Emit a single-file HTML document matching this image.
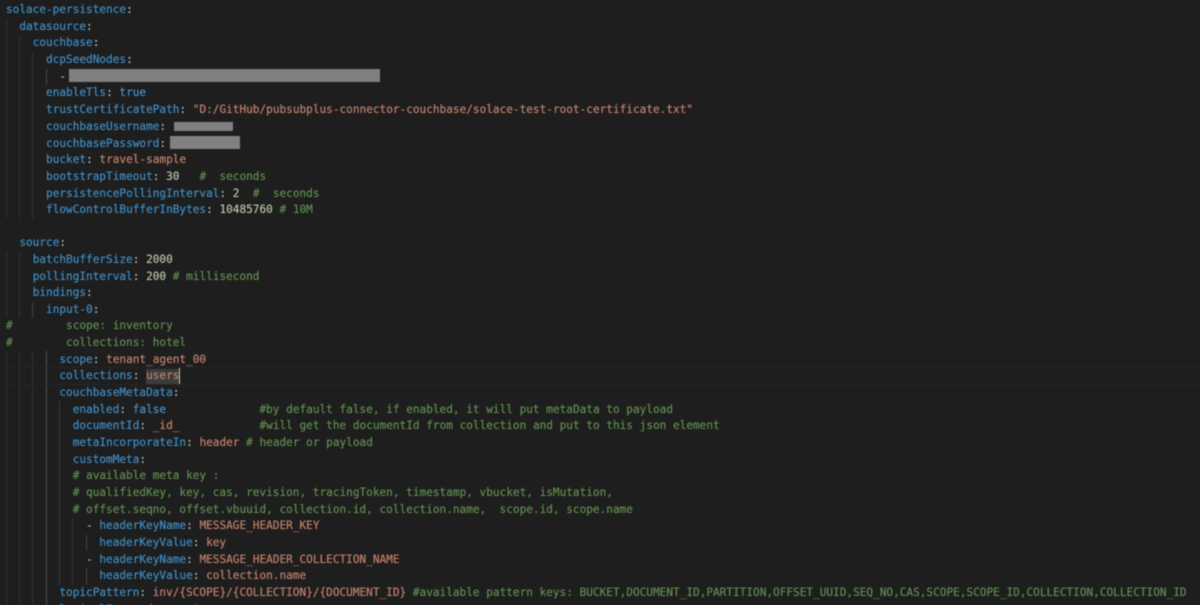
<!DOCTYPE html>
<html><head><meta charset="utf-8"><style>
html,body{margin:0;padding:0;background:#1e1e1e}
#p{position:relative;width:1200px;height:605px;overflow:hidden;background:#1e1e1e}
#b{position:absolute;inset:0;filter:blur(.45px)}
pre{position:absolute;left:0;top:1px;margin:0;padding:0;font:11.09px/16.65px "DejaVu Sans Mono","Liberation Mono",monospace;color:#b8b8b0;white-space:pre;text-shadow:0 0 .4px currentColor}
pre div{position:absolute;left:6px;height:16.65px}
.k{color:#3f8cc4}.s{color:#c0806a}.c{color:#5f8c50}.n{color:#b5c4a5}.b{color:#4a90c8}.p{color:#c8c8c8}
.g{position:absolute;width:1px;background:#323232}
.r{position:absolute;background:#808080}
</style></head><body><div id="p"><div id="b">
<div class="g" style="left:6px;top:18px;height:200px"></div>
<div class="g" style="left:19px;top:35px;height:183px"></div>
<div class="g" style="left:32px;top:52px;height:167px"></div>
<div class="g" style="left:46px;top:69px;height:16px;background:#484848"></div>
<div class="g" style="left:6px;top:251px;height:67px"></div>
<div class="g" style="left:19px;top:251px;height:67px"></div>
<div class="g" style="left:32px;top:302px;height:16px;background:#444"></div>
<div class="g" style="left:6px;top:351px;height:254px"></div>
<div class="g" style="left:19px;top:351px;height:254px"></div>
<div class="g" style="left:32px;top:351px;height:254px"></div>
<div class="g" style="left:46px;top:351px;height:254px;background:#505050"></div>
<div class="g" style="left:59px;top:401px;height:184px;background:#383838"></div>
<div class="g" style="left:72px;top:518px;height:67px"></div>
<div class="g" style="left:86px;top:535px;height:16px;background:#444"></div>
<div class="g" style="left:86px;top:568px;height:16px;background:#444"></div>
<div style="position:absolute;left:0;top:367px;width:1200px;height:18px;border-top:1px solid #262626;border-bottom:1px solid #262626;box-sizing:border-box"></div>
<div style="position:absolute;left:146px;top:369px;width:33px;height:15px;background:#3c3c3c"></div>
<div style="position:absolute;left:179px;top:368px;width:1px;height:16px;background:#b8c8b8"></div>
<pre>
<div style="top:1px"><span class="k">solace-persistence</span>:</div>
<div style="top:18px">  <span class="k">datasource</span>:</div>
<div style="top:34px">    <span class="k">couchbase</span>:</div>
<div style="top:51px">      <span class="k">dcpSeedNodes</span>:</div>
<div style="top:68px">        - </div>
<div style="top:84px">      <span class="k">enableTls</span>: <span class="b">true</span></div>
<div style="top:101px">      <span class="k">trustCertificatePath</span>: <span class="s">"D:/GitHub/pubsubplus-connector-couchbase/solace-test-root-certificate.txt"</span></div>
<div style="top:118px">      <span class="k">couchbaseUsername</span>: </div>
<div style="top:135px">      <span class="k">couchbasePassword</span>: </div>
<div style="top:151px">      <span class="k">bucket</span>: <span class="s">travel-sample</span></div>
<div style="top:168px">      <span class="k">bootstrapTimeout</span>: <span class="n">30</span>   <span class="c">#  seconds</span></div>
<div style="top:185px">      <span class="k">persistencePollingInterval</span>: <span class="n">2</span>  <span class="c">#  seconds</span></div>
<div style="top:201px">      <span class="k">flowControlBufferInBytes</span>: <span class="n">10485760</span> <span class="c"># 10M</span></div>
<div style="top:234px">  <span class="k">source</span>:</div>
<div style="top:251px">    <span class="k">batchBufferSize</span>: <span class="n">2000</span></div>
<div style="top:268px">    <span class="k">pollingInterval</span>: <span class="n">200</span> <span class="c"># millisecond</span></div>
<div style="top:284px">    <span class="k">bindings</span>:</div>
<div style="top:301px">      <span class="k">input-0</span>:</div>
<div style="top:317px"><span class="c">#        scope: inventory</span></div>
<div style="top:334px"><span class="c">#        collections: hotel</span></div>
<div style="top:351px">        <span class="k">scope</span>: <span class="s">tenant_agent_00</span></div>
<div style="top:367px">        <span class="k">collections</span>: <span class="s">users</span></div>
<div style="top:384px">        <span class="k">couchbaseMetaData</span>:</div>
<div style="top:401px">          <span class="k">enabled</span>: <span class="b">false</span>              <span class="c">#by default false, if enabled, it will put metaData to payload</span></div>
<div style="top:417px">          <span class="k">documentId</span>: <span class="s">_id_</span>            <span class="c">#will get the documentId from collection and put to this json element</span></div>
<div style="top:434px">          <span class="k">metaIncorporateIn</span>: <span class="s">header</span> <span class="c"># header or payload</span></div>
<div style="top:451px">          <span class="k">customMeta</span>:</div>
<div style="top:467px">          <span class="c"># available meta key :</span></div>
<div style="top:484px">          <span class="c"># qualifiedKey, key, cas, revision, tracingToken, timestamp, vbucket, isMutation,</span></div>
<div style="top:501px">          <span class="c"># offset.seqno, offset.vbuuid, collection.id, collection.name,  scope.id, scope.name</span></div>
<div style="top:517px">            - <span class="k">headerKeyName</span>: <span class="s">MESSAGE_HEADER_KEY</span></div>
<div style="top:534px">              <span class="k">headerKeyValue</span>: <span class="s">key</span></div>
<div style="top:551px">            - <span class="k">headerKeyName</span>: <span class="s">MESSAGE_HEADER_COLLECTION_NAME</span></div>
<div style="top:567px">              <span class="k">headerKeyValue</span>: <span class="s">collection.name</span></div>
<div style="top:584px">        <span class="k">topicPattern</span>: <span class="s">inv/{SCOPE}/{COLLECTION}/{DOCUMENT_ID}</span> <span class="c">#available pattern keys: BUCKET,DOCUMENT_ID,PARTITION,OFFSET_UUID,SEQ_NO,CAS,SCOPE,SCOPE_ID,COLLECTION,COLLECTION_ID</span></div>
<div style="top:601px">        <span class="k">logicalType</span>: <span class="s">document</span></div>
</pre>
<div class="r" style="left:69px;top:69px;width:311px;height:13px"></div>
<div class="r" style="left:174px;top:122px;width:59px;height:9px"></div>
<div class="r" style="left:170px;top:136px;width:70px;height:13px"></div>
</div></div></body></html>
